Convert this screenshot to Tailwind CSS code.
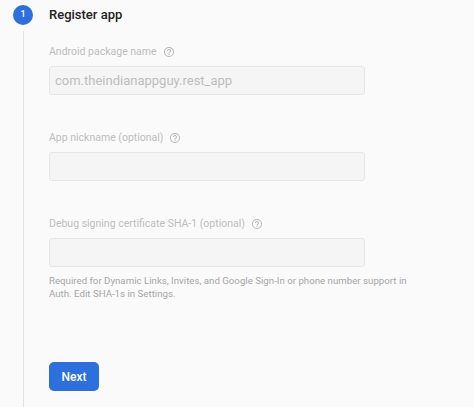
<!DOCTYPE html>
<html lang="en">
<head>
  <meta charset="UTF-8" />
  <title>Register app</title>
  <script src="https://cdn.jsdelivr.net/npm/@tailwindcss/browser@4"></script>
</head>
<body class="bg-[#fafafa] font-['Roboto',sans-serif] h-[407px] w-[474px] overflow-hidden">
  <div class="flex h-[407px]">
    <!-- step rail -->
    <div class="w-[49px] shrink-0 flex flex-col pl-[13px] pt-[5px]">
      <div class="w-[20px] h-[20px] rounded-full bg-[#2d6fdc] text-white text-[9px] font-medium flex items-center justify-center">1</div>
      <div class="w-px flex-1 bg-[#e2e2e2] ml-[10px] mt-[6px]"></div>
    </div>

    <!-- step body -->
    <div class="flex-1 flex flex-col">
      <h2 class="text-[13px] leading-[20px] font-medium text-[#212121] mt-[5px]">Register app</h2>

      <div class="flex items-center gap-[6px] mt-[17px] h-[20px]">
        <span class="text-[10.500px] text-[#bdbdbd]">Android package name</span>
        <svg class="w-[12px] h-[12px]" viewBox="0 0 24 24" fill="#b5b5b5"><path d="M12 2a10 10 0 1 0 0 20 10 10 0 0 0 0-20zm0 18a8 8 0 1 1 0-16 8 8 0 0 1 0 16zm-1-4h2v2h-2v-2zm1-10a4 4 0 0 0-4 4h2a2 2 0 1 1 4 0c0 2-3 1.750-3 5h2c0-2.250 3-2.500 3-5a4 4 0 0 0-4-4z"/></svg>
      </div>
      <div class="w-[316px] h-[29px] mt-[4px] rounded-[3px] border border-[#e6e6e6] bg-[#f5f5f5] px-[5px] flex items-center text-[13px] text-[#bdbdbd]">com.theindianappguy.rest_app</div>

      <div class="flex items-center gap-[6px] mt-[33px] h-[20px]">
        <span class="text-[10.500px] text-[#bdbdbd]">App nickname (optional)</span>
        <svg class="w-[12px] h-[12px]" viewBox="0 0 24 24" fill="#b5b5b5"><path d="M12 2a10 10 0 1 0 0 20 10 10 0 0 0 0-20zm0 18a8 8 0 1 1 0-16 8 8 0 0 1 0 16zm-1-4h2v2h-2v-2zm1-10a4 4 0 0 0-4 4h2a2 2 0 1 1 4 0c0 2-3 1.750-3 5h2c0-2.250 3-2.500 3-5a4 4 0 0 0-4-4z"/></svg>
      </div>
      <div class="w-[316px] h-[29px] mt-[4px] rounded-[3px] border border-[#e6e6e6] bg-[#f5f5f5]"></div>

      <div class="flex items-center gap-[6px] mt-[33px] h-[20px]">
        <span class="text-[10.500px] text-[#bdbdbd]">Debug signing certificate SHA-1 (optional)</span>
        <svg class="w-[12px] h-[12px]" viewBox="0 0 24 24" fill="#b5b5b5"><path d="M12 2a10 10 0 1 0 0 20 10 10 0 0 0 0-20zm0 18a8 8 0 1 1 0-16 8 8 0 0 1 0 16zm-1-4h2v2h-2v-2zm1-10a4 4 0 0 0-4 4h2a2 2 0 1 1 4 0c0 2-3 1.750-3 5h2c0-2.250 3-2.500 3-5a4 4 0 0 0-4-4z"/></svg>
      </div>
      <div class="w-[316px] h-[29px] mt-[4px] rounded-[3px] border border-[#e6e6e6] bg-[#f5f5f5]"></div>

      <p class="w-[370px] mt-[7px] text-[9.700px] leading-[13px] text-[#a6a6a6]">Required for Dynamic Links, Invites, and Google Sign-In or phone number support in Auth. Edit SHA-1s in Settings.</p>

      <button class="w-[50px] h-[29px] mt-[62px] rounded-[5px] bg-[#2d6fdc] text-white text-[12px] font-medium">Next</button>
    </div>
  </div>
</body>
</html>
